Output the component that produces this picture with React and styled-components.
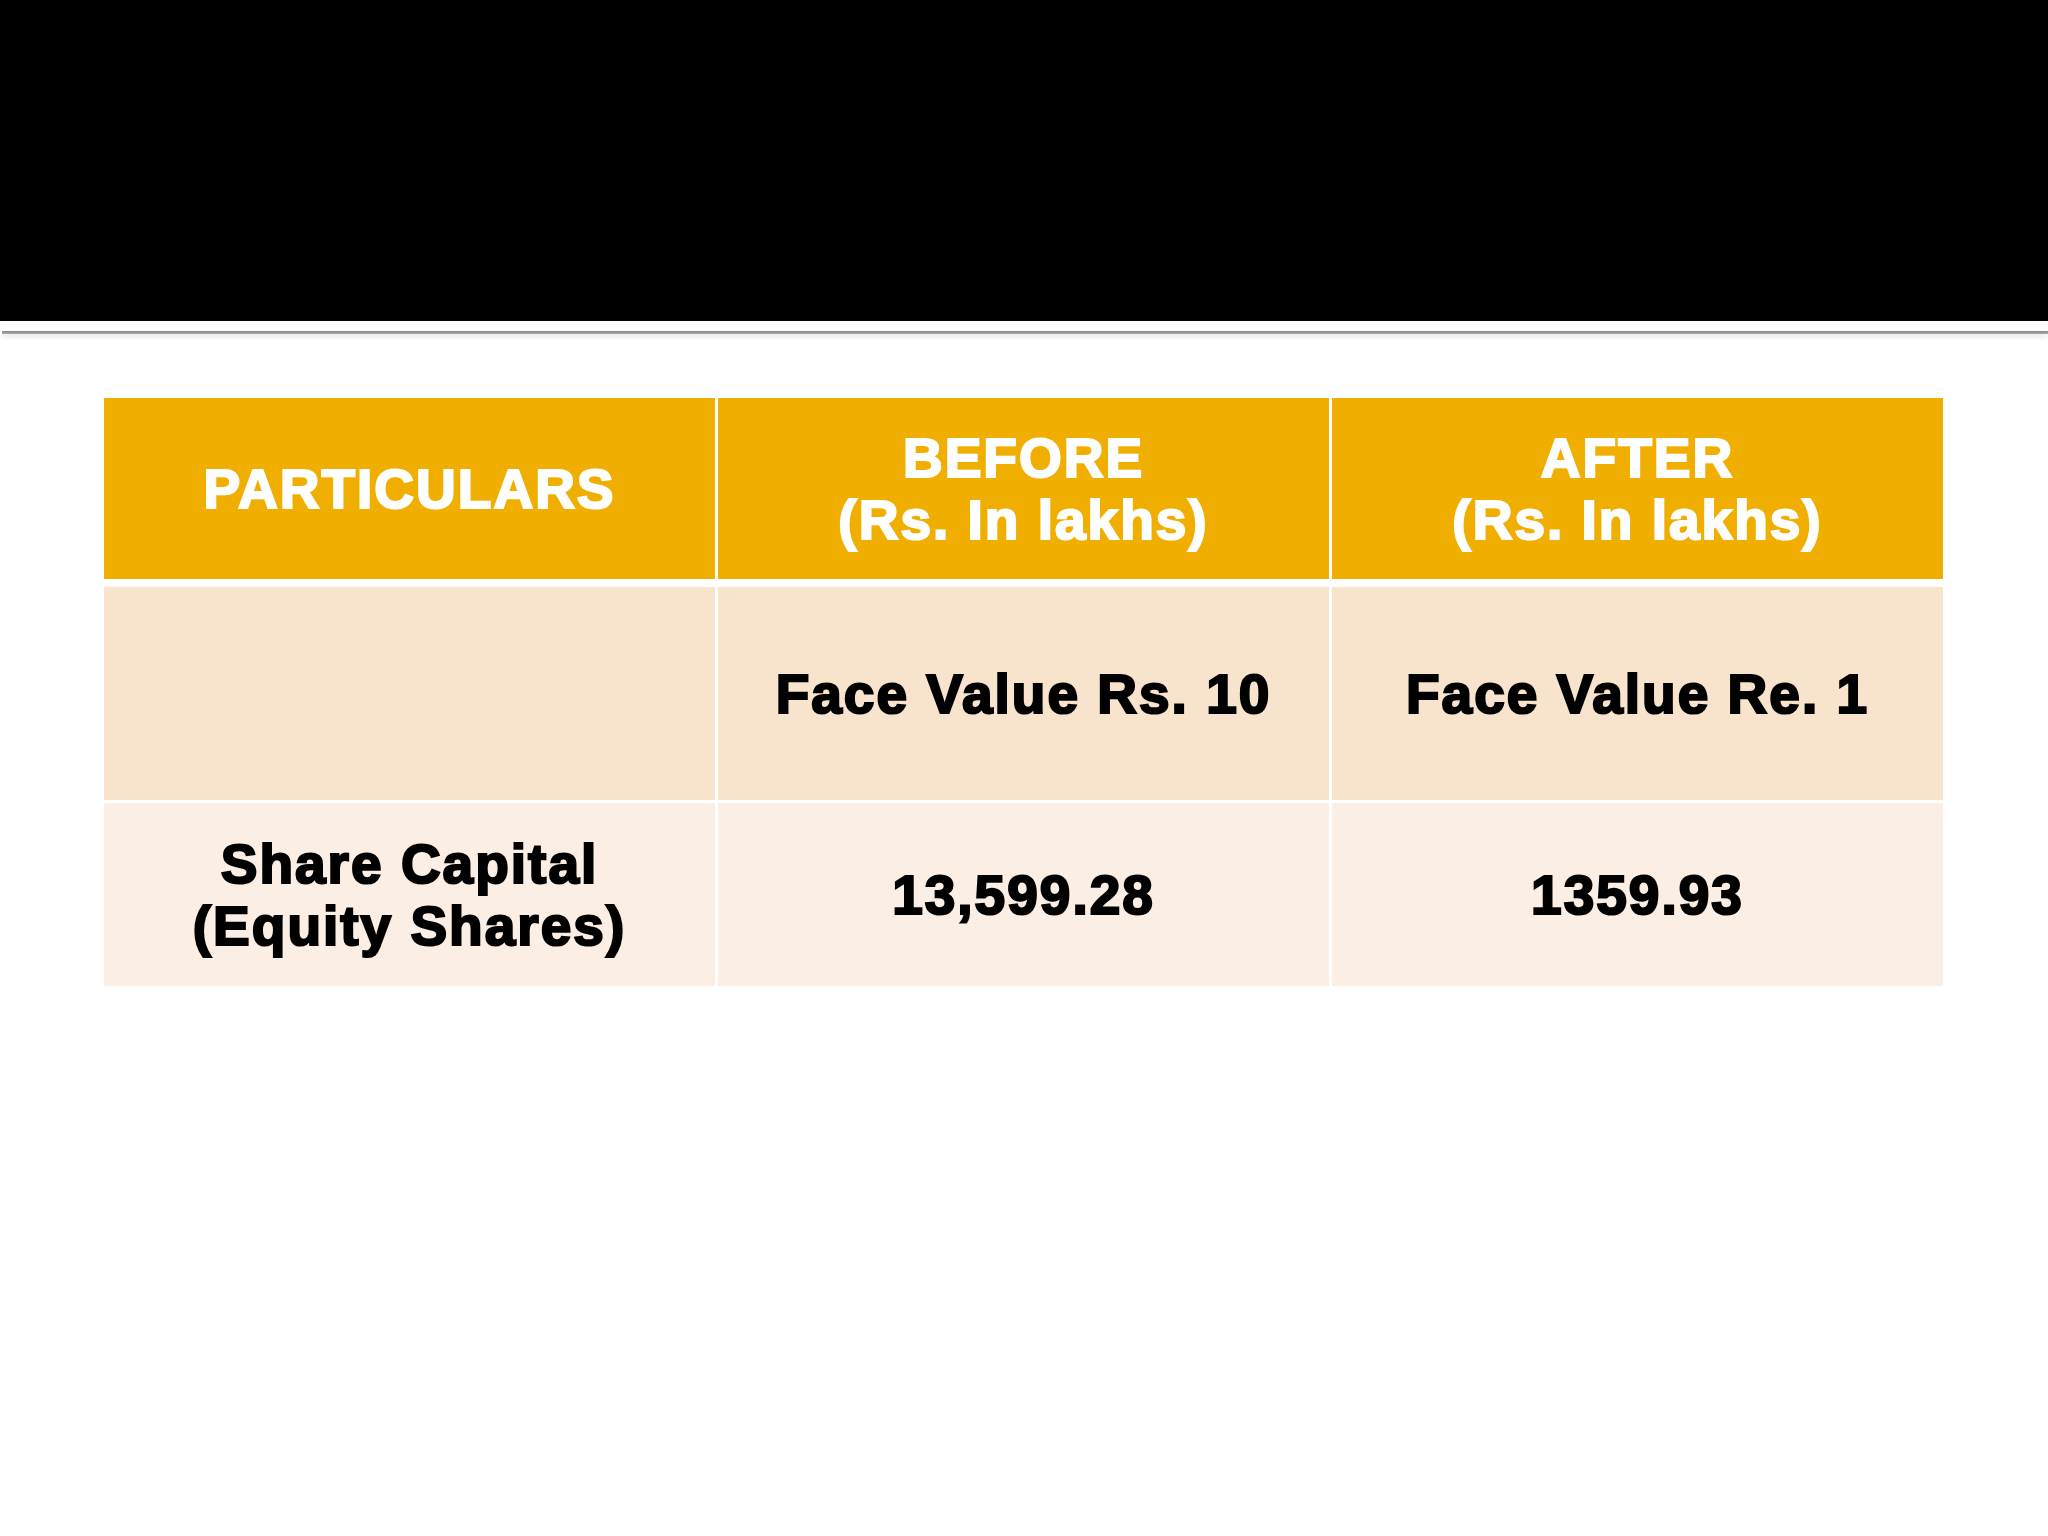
import React from 'react'
import styled, { createGlobalStyle } from 'styled-components'

const GlobalStyle = createGlobalStyle`
  html, body {
    margin: 0;
    padding: 0;
    background: #ffffff;
  }
  body {
    font-family: 'Liberation Sans', Arial, sans-serif;
  }
`

const rows = [
  { label: '', before: 'Face Value Rs. 10', after: 'Face Value Re. 1', tone: 'peach' },
  {
    label: ['Share Capital', '(Equity Shares)'],
    before: '13,599.28',
    after: '1359.93',
    tone: 'light',
  },
]

const tones = {
  peach: '#f8e3cd',
  light: '#fbefe5',
}

const App = () => {
  return (
    <Slide>
      <GlobalStyle />
      <TitleBar />
      <Rule />
      <TableWrap>
        <Table>
          <HeadCell>PARTICULARS</HeadCell>
          <HeadCell>
            BEFORE
            <br />
            (Rs. In lakhs)
          </HeadCell>
          <HeadCell>
            AFTER
            <br />
            (Rs. In lakhs)
          </HeadCell>
          {rows.map((row, i) => (
            <React.Fragment key={i}>
              <BodyCell $tone={row.tone}>
                {Array.isArray(row.label)
                  ? row.label.map((l, j) => (
                      <React.Fragment key={j}>
                        {j > 0 && <br />}
                        {l}
                      </React.Fragment>
                    ))
                  : row.label}
              </BodyCell>
              <BodyCell $tone={row.tone}>{row.before}</BodyCell>
              <BodyCell $tone={row.tone}>{row.after}</BodyCell>
            </React.Fragment>
          ))}
        </Table>
      </TableWrap>
    </Slide>
  )
}

const Slide = styled.div`
  width: 2048px;
  height: 1536px;
  background: #ffffff;
  overflow: hidden;
`

const TitleBar = styled.div`
  height: 321px;
  background: #000000;
`

const Rule = styled.div`
  margin: 10px 0 0 2px;
  height: 3px;
  background: linear-gradient(to bottom, #8a8a8a, #a9a9a9);
  box-shadow: 0 3px 4px rgba(0, 0, 0, 0.12);
`

const TableWrap = styled.div`
  padding: 64px 0 0 104px;
`

const Table = styled.div`
  display: grid;
  width: 1839px;
  grid-template-columns: repeat(3, 1fr);
  grid-template-rows: 186px 213px 183px;
  column-gap: 3px;
  row-gap: 3px;

  & > :nth-child(-n + 3) {
    margin-bottom: 5px;
  }
`

const Cell = styled.div`
  display: flex;
  align-items: center;
  justify-content: center;
  text-align: center;
  font-family: 'Liberation Sans', Arial, sans-serif;
  font-weight: 700;
  font-size: 55px;
  line-height: 62px;
  letter-spacing: 2px;
`

const HeadCell = styled(Cell)`
  background: #f0ae00;
  color: #ffffff;
  -webkit-text-stroke: 2.2px #ffffff;
`

const BodyCell = styled(Cell)`
  background: ${p => tones[p.$tone]};
  color: #000000;
  -webkit-text-stroke: 2.2px #000000;
`

export default App
